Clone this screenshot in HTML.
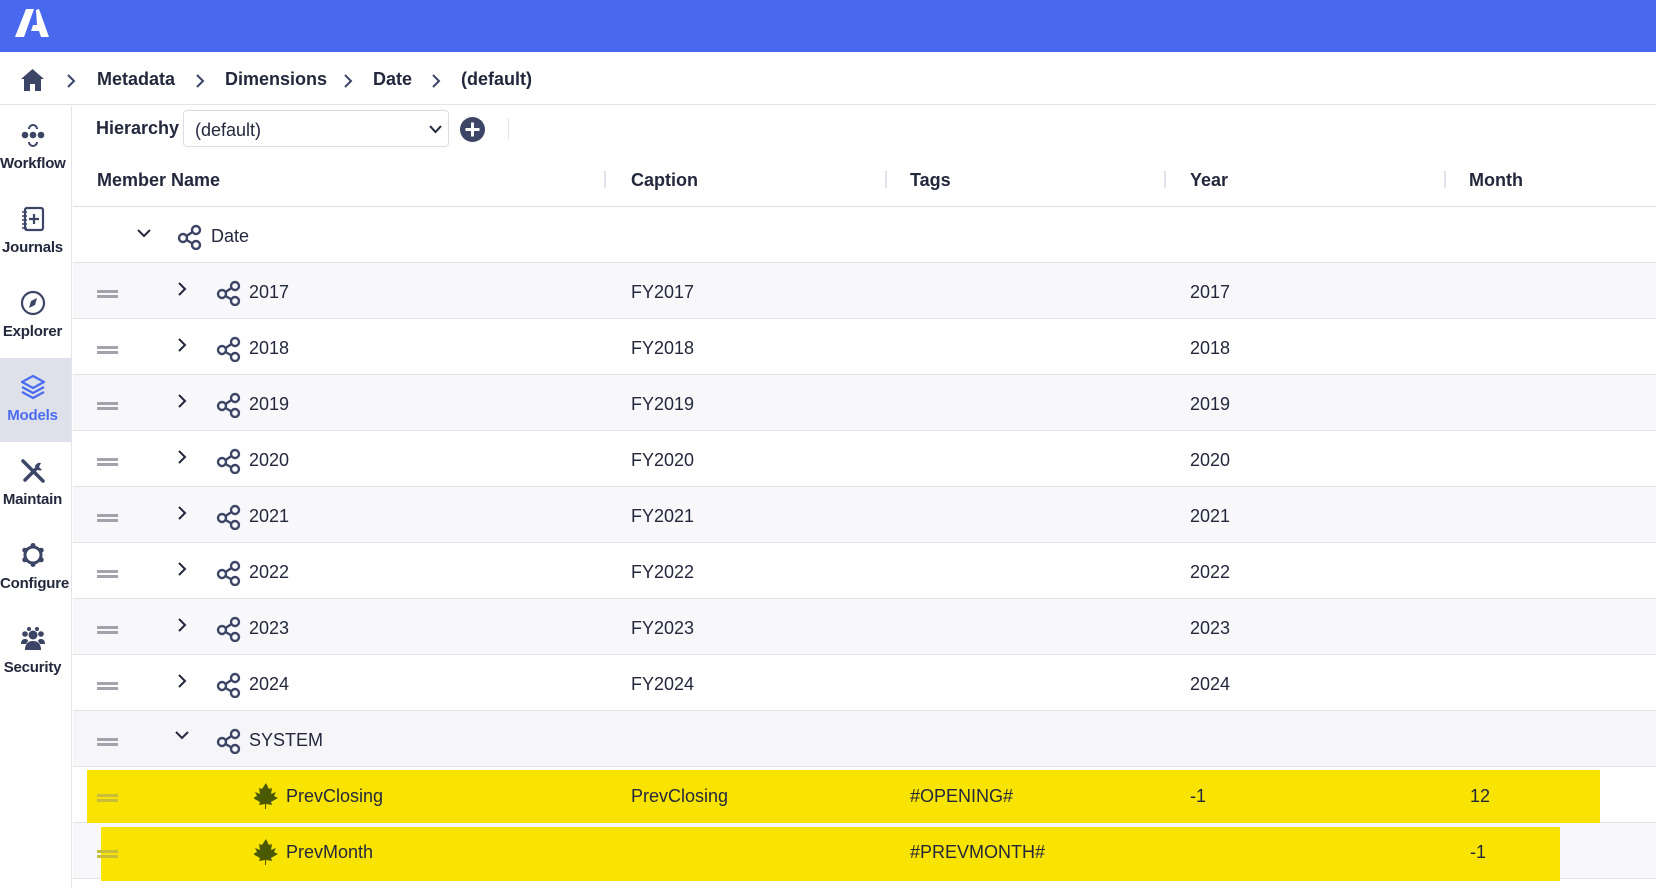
<!DOCTYPE html>
<html><head><meta charset="utf-8"><style>
*{box-sizing:border-box;margin:0;padding:0}
body{width:1656px;height:888px;overflow:hidden;background:#fff;font-family:"Liberation Sans",sans-serif;color:#24283d;position:relative}
.top{position:absolute;left:0;top:0;width:1656px;height:52px;background:#4868ee}
.bc{position:absolute;top:0;height:105px;left:0;width:1656px;border-bottom:1px solid #e3e4ea}
.bc span{position:absolute;top:69px;font-size:18px;font-weight:bold;color:#24283d}
.side{position:absolute;left:0;top:106px;width:72px;height:782px;border-right:1px solid #e3e4ea;background:#fff}
.si{position:absolute;left:0;width:65px;text-align:center;font-size:15px;font-weight:bold;color:#24283d;letter-spacing:-0.2px}
.si svg{display:block;margin:0 auto 7px}
.abs{position:absolute}
.row{position:absolute;left:73px;width:1583px;height:56px;border-bottom:1px solid #e3e4ea}
.t{position:absolute;font-size:18px;color:#24283d;top:19px}
.h{position:absolute;font-size:18px;font-weight:bold;top:170px;color:#24283d}
.sep{position:absolute;top:171px;width:2px;height:17px;background:#dfe2ea}
.dh{position:absolute;left:24px;top:27px;width:21px;height:8px;border-top:3px solid #a3a3ab;border-bottom:3px solid #a3a3ab}
</style></head><body>
<div class="top">
<svg class="abs" style="left:15px;top:9px" width="34" height="28" viewBox="0 0 34 28"><path d="M11 0h8L9 28H0z" fill="#fff"/><path d="M21 1l3-1 10 28h-8l-2-6h-8l2-6h4z" fill="#fff"/></svg>
</div>
<div class="bc">
<svg class="abs" style="left:21px;top:69px" width="23" height="22" viewBox="0 0 23 22"><path d="M11.5 0L0 10h3v12h6v-7h5v7h6V10h3z" fill="#3d4566"/></svg>
<svg class="abs" style="left:66px;top:74px" width="10" height="14" viewBox="0 0 10 14"><path d="M2 1l6 6-6 6" stroke="#3d4566" stroke-width="2" fill="none"/></svg>
<span style="left:97px">Metadata</span>
<svg class="abs" style="left:195px;top:74px" width="10" height="14" viewBox="0 0 10 14"><path d="M2 1l6 6-6 6" stroke="#3d4566" stroke-width="2" fill="none"/></svg>
<span style="left:225px">Dimensions</span>
<svg class="abs" style="left:343px;top:74px" width="10" height="14" viewBox="0 0 10 14"><path d="M2 1l6 6-6 6" stroke="#3d4566" stroke-width="2" fill="none"/></svg>
<span style="left:373px">Date</span>
<svg class="abs" style="left:431px;top:74px" width="10" height="14" viewBox="0 0 10 14"><path d="M2 1l6 6-6 6" stroke="#3d4566" stroke-width="2" fill="none"/></svg>
<span style="left:461px">(default)</span>
</div>
<div class="side">
<div class="si" style="top:18px"><svg width="26" height="24" viewBox="0 0 26 24"><path d="M9 5a4 4 0 0 1 8 0" stroke="#3d4566" stroke-width="2" fill="none"/><circle cx="5" cy="11" r="3.3" fill="#3d4566"/><circle cx="13" cy="11" r="3.3" fill="#3d4566"/><circle cx="21" cy="11" r="3.3" fill="#3d4566"/><path d="M9 18a4 4 0 0 0 8 0" stroke="#3d4566" stroke-width="2" fill="none"/></svg>Workflow</div>
<div class="si" style="top:100px"><svg width="26" height="26" viewBox="0 0 26 26"><rect x="5" y="2" width="18" height="22" rx="2" stroke="#3d4566" stroke-width="2.2" fill="none"/><path d="M2 6h5M2 10h5M2 14h5M2 18h5M2 22h5" stroke="#3d4566" stroke-width="1.6"/><path d="M14 8v10M9 13h10" stroke="#3d4566" stroke-width="2.2"/></svg>Journals</div>
<div class="si" style="top:184px"><svg width="26" height="26" viewBox="0 0 26 26"><circle cx="13" cy="13" r="11" stroke="#3d4566" stroke-width="2.2" fill="none"/><path d="M17 8l-6 3-2 7 6-3z" fill="#3d4566"/></svg>Explorer</div>
<div class="abs" style="left:0;top:252px;width:71px;height:84px;background:#dfe1ea"></div>
<div class="si" style="top:268px;color:#4a6cf0"><svg width="26" height="26" viewBox="0 0 26 26"><path d="M13 2l11 6-11 6L2 8z" stroke="#4a6cf0" stroke-width="2.2" fill="none" stroke-linejoin="round"/><path d="M2 13l11 6 11-6M2 18l11 6 11-6" stroke="#4a6cf0" stroke-width="2.2" fill="none" stroke-linejoin="round"/></svg>Models</div>
<div class="si" style="top:352px"><svg width="26" height="26" viewBox="0 0 26 26"><path d="M3 3l20 20" stroke="#3d4566" stroke-width="3.5" stroke-linecap="round"/><path d="M5 22L16 11" stroke="#3d4566" stroke-width="3.5" stroke-linecap="round"/><path d="M15 8a5 5 0 0 0 7 4l-3-3 2-4a5 5 0 0 0-6 3z" fill="#3d4566"/></svg>Maintain</div>
<div class="si" style="top:436px"><svg width="26" height="26" viewBox="0 0 26 26"><circle cx="13" cy="13" r="8" stroke="#3d4566" stroke-width="3" fill="none"/><g fill="#3d4566"><circle cx="13" cy="3.5" r="2.5"/><circle cx="13" cy="22.5" r="2.5"/><circle cx="4.8" cy="8.2" r="2.5"/><circle cx="21.2" cy="8.2" r="2.5"/><circle cx="4.8" cy="17.8" r="2.5"/><circle cx="21.2" cy="17.8" r="2.5"/></g></svg>Configure</div>
<div class="si" style="top:520px"><svg width="26" height="26" viewBox="0 0 26 26"><g fill="#3d4566"><circle cx="13" cy="9" r="4.5"/><circle cx="5" cy="8" r="2.8"/><circle cx="21" cy="8" r="2.8"/><circle cx="9" cy="3" r="2"/><circle cx="17" cy="3" r="2"/><path d="M5 24c0-7 4-9 8-9s8 2 8 9z"/><path d="M1 18c0-4 2-5 4-5s3 1 3 2l-2 3z M25 18c0-4-2-5-4-5s-3 1-3 2l2 3z"/></g></svg>Security</div>
</div>
<div class="abs" style="left:96px;top:118px;font-size:18px;font-weight:bold">Hierarchy</div>
<div class="abs" style="left:183px;top:110px;width:266px;height:37px;border:1px solid #dcdde3;border-radius:4px;font-size:18px;padding:9px 0 0 11px">(default)
<svg class="abs" style="right:6px;top:14px" width="13" height="9" viewBox="0 0 13 9"><path d="M1 1l5.5 6L12 1" stroke="#24283d" stroke-width="2" fill="none"/></svg></div>
<svg class="abs" style="left:460px;top:117px" width="25" height="25" viewBox="0 0 25 25"><circle cx="12.5" cy="12.5" r="12.5" fill="#3d4566"/><path d="M12.5 5.5v14M5.5 12.5h14" stroke="#fff" stroke-width="3"/></svg>
<div class="abs" style="left:508px;top:118px;width:1px;height:22px;background:#e3e4ea"></div>
<div class="h" style="left:97px">Member Name</div>
<div class="sep" style="left:604px"></div><div class="h" style="left:631px">Caption</div>
<div class="sep" style="left:885px"></div><div class="h" style="left:910px">Tags</div>
<div class="sep" style="left:1164px"></div><div class="h" style="left:1190px">Year</div>
<div class="sep" style="left:1444px"></div><div class="h" style="left:1469px">Month</div>
<div class="abs" style="left:73px;top:206px;width:1583px;height:2px;background:#dcdde5"></div>

<svg width="0" height="0" style="position:absolute"><defs>
<symbol id="sh" viewBox="0 0 26 26"><circle cx="6" cy="14" r="4" stroke="#3d4566" stroke-width="2.4" fill="none"/><circle cx="19" cy="6" r="4" stroke="#3d4566" stroke-width="2.4" fill="none"/><circle cx="19" cy="21" r="4" stroke="#3d4566" stroke-width="2.4" fill="none"/><path d="M9.5 12l6-4M9.5 16l6 3.5" stroke="#3d4566" stroke-width="2.4"/></symbol>
<symbol id="cr" viewBox="0 0 10 14"><path d="M2 1l6 6-6 6" stroke="#24283d" stroke-width="2" fill="none"/></symbol>
<symbol id="cd" viewBox="0 0 14 10"><path d="M1 2l6 6 6-6" stroke="#24283d" stroke-width="2" fill="none"/></symbol>
<symbol id="lf" viewBox="0 0 24 26"><path d="M12 0l3 6 3-1-1 6 5-2-2 4 4 2-7 4 1 3-6-1v5h-1v-5l-6 1 1-3-7-4 4-2-2-4 5 2-1-6 3 1z" fill="#4b5a00"/></symbol>
</defs></svg>

<div class="row" style="top:207px;height:56px;background:#fff">
<svg class="abs" style="left:64px;top:21px" width="14" height="10"><use href="#cd"/></svg>
<svg class="abs" style="left:104px;top:17px" width="26" height="26"><use href="#sh"/></svg>
<div class="t" style="left:138px">Date</div></div>

<div class="row" style="top:263px;background:#f8f8fa"><div class="dh"></div><svg class="abs" style="left:104px;top:19px" width="10" height="14"><use href="#cr"/></svg><svg class="abs" style="left:143px;top:17px" width="26" height="26"><use href="#sh"/></svg><div class="t" style="left:176px">2017</div><div class="t" style="left:558px">FY2017</div><div class="t" style="left:1117px">2017</div></div>
<div class="row" style="top:319px;background:#fff"><div class="dh"></div><svg class="abs" style="left:104px;top:19px" width="10" height="14"><use href="#cr"/></svg><svg class="abs" style="left:143px;top:17px" width="26" height="26"><use href="#sh"/></svg><div class="t" style="left:176px">2018</div><div class="t" style="left:558px">FY2018</div><div class="t" style="left:1117px">2018</div></div>
<div class="row" style="top:375px;background:#f8f8fa"><div class="dh"></div><svg class="abs" style="left:104px;top:19px" width="10" height="14"><use href="#cr"/></svg><svg class="abs" style="left:143px;top:17px" width="26" height="26"><use href="#sh"/></svg><div class="t" style="left:176px">2019</div><div class="t" style="left:558px">FY2019</div><div class="t" style="left:1117px">2019</div></div>
<div class="row" style="top:431px;background:#fff"><div class="dh"></div><svg class="abs" style="left:104px;top:19px" width="10" height="14"><use href="#cr"/></svg><svg class="abs" style="left:143px;top:17px" width="26" height="26"><use href="#sh"/></svg><div class="t" style="left:176px">2020</div><div class="t" style="left:558px">FY2020</div><div class="t" style="left:1117px">2020</div></div>
<div class="row" style="top:487px;background:#f8f8fa"><div class="dh"></div><svg class="abs" style="left:104px;top:19px" width="10" height="14"><use href="#cr"/></svg><svg class="abs" style="left:143px;top:17px" width="26" height="26"><use href="#sh"/></svg><div class="t" style="left:176px">2021</div><div class="t" style="left:558px">FY2021</div><div class="t" style="left:1117px">2021</div></div>
<div class="row" style="top:543px;background:#fff"><div class="dh"></div><svg class="abs" style="left:104px;top:19px" width="10" height="14"><use href="#cr"/></svg><svg class="abs" style="left:143px;top:17px" width="26" height="26"><use href="#sh"/></svg><div class="t" style="left:176px">2022</div><div class="t" style="left:558px">FY2022</div><div class="t" style="left:1117px">2022</div></div>
<div class="row" style="top:599px;background:#f8f8fa"><div class="dh"></div><svg class="abs" style="left:104px;top:19px" width="10" height="14"><use href="#cr"/></svg><svg class="abs" style="left:143px;top:17px" width="26" height="26"><use href="#sh"/></svg><div class="t" style="left:176px">2023</div><div class="t" style="left:558px">FY2023</div><div class="t" style="left:1117px">2023</div></div>
<div class="row" style="top:655px;background:#fff"><div class="dh"></div><svg class="abs" style="left:104px;top:19px" width="10" height="14"><use href="#cr"/></svg><svg class="abs" style="left:143px;top:17px" width="26" height="26"><use href="#sh"/></svg><div class="t" style="left:176px">2024</div><div class="t" style="left:558px">FY2024</div><div class="t" style="left:1117px">2024</div></div>
<div class="row" style="top:711px;background:#f6f6f9"><div class="dh"></div><svg class="abs" style="left:102px;top:19px" width="14" height="10"><use href="#cd"/></svg><svg class="abs" style="left:143px;top:17px" width="26" height="26"><use href="#sh"/></svg><div class="t" style="left:176px">SYSTEM</div></div>
<div class="row" style="top:767px;background:#fff"><div class="abs" style="left:14px;top:3px;width:1513px;height:54px;background:#f9e300"></div><div class="dh" style="border-color:#c9bd3a"></div><svg class="abs" style="left:181px;top:16px" width="24" height="26"><use href="#lf"/></svg><div class="t" style="left:213px">PrevClosing</div><div class="t" style="left:558px">PrevClosing</div><div class="t" style="left:837px">#OPENING#</div><div class="t" style="left:1117px">-1</div><div class="t" style="left:1397px">12</div></div>
<div class="row" style="top:823px;background:#f8f8fa"><div class="dh" style="border-color:#c9bd3a"></div><div class="abs" style="left:28px;top:4px;width:1459px;height:54px;background:#f9e300"></div><div class="dh" style="border-color:#c9bd3a;left:28px;width:17px"></div><svg class="abs" style="left:181px;top:16px" width="24" height="26"><use href="#lf"/></svg><div class="t" style="left:213px">PrevMonth</div><div class="t" style="left:837px">#PREVMONTH#</div><div class="t" style="left:1397px">-1</div></div>
</body></html>
